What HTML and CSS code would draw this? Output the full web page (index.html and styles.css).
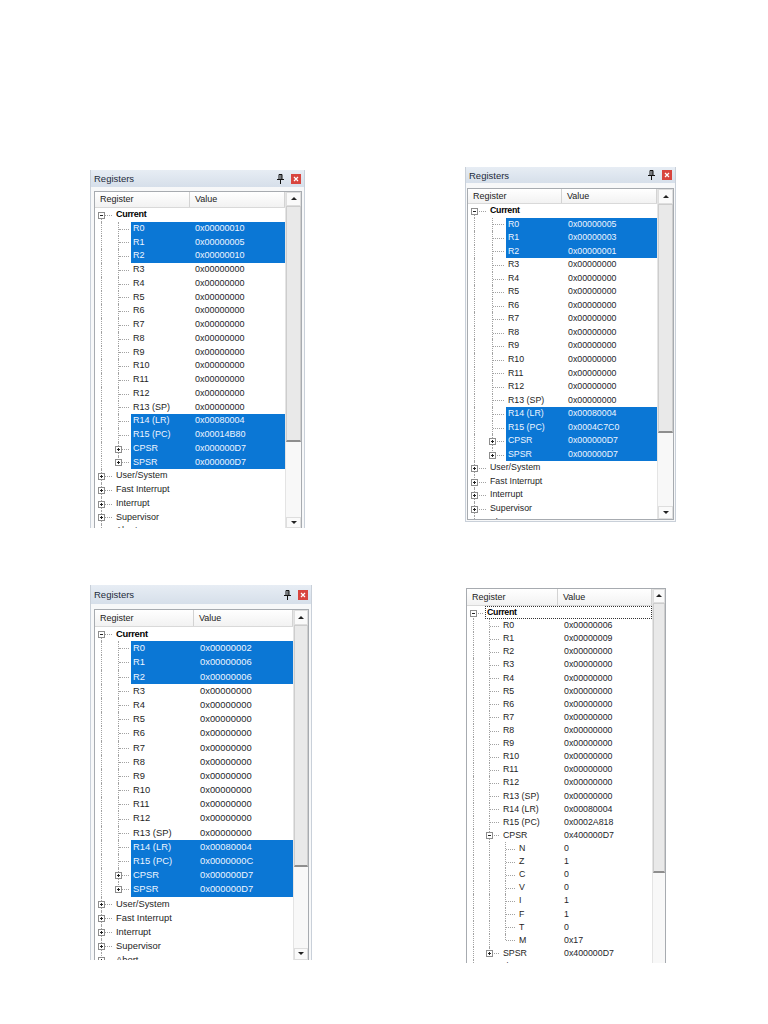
FILE: index.html
```html
<!DOCTYPE html>
<html lang="en">
<head>
  <meta charset="UTF-8">
  <title>Registers</title>
<link rel="stylesheet" href="styles.css">
</head>
<body>
<div class="page">

  <!-- 1 -->
  <div class="panel p1">
    <div class="title">
      <span>Registers</span>
      <span class="btns">
        <svg width="7" height="10" viewBox="0 0 7 10"><path d="M2 .5h3v5h-3z" fill="none" stroke="#111"/><path d="M4 1v4M0 5.5h7M3.5 5.5V10" stroke="#111"/></svg>
        <svg width="10" height="10" viewBox="0 0 10 10"><rect width="10" height="10" fill="#d8453e"/><path d="M3 3l4 4M7 3L3 7" stroke="#fff" stroke-width="1.2"/></svg>
      </span>
    </div>
    <div class="body">
      <div class="list">
        <div class="main">
          <div class="head"><div class="hc">Register</div><div class="hc">Value</div></div>
          <div class="row top"><div class="t"><i class="c first"><i class="x"></i></i><b class="n">Current</b></div></div>
          <div class="row sel"><div class="t"><i class="g"></i><i class="c"></i><span class="n">R0</span></div><div class="v">0x00000010</div></div>
          <div class="row sel"><div class="t"><i class="g"></i><i class="c"></i><span class="n">R1</span></div><div class="v">0x00000005</div></div>
          <div class="row sel"><div class="t"><i class="g"></i><i class="c"></i><span class="n">R2</span></div><div class="v">0x00000010</div></div>
          <div class="row"><div class="t"><i class="g"></i><i class="c"></i><span class="n">R3</span></div><div class="v">0x00000000</div></div>
          <div class="row"><div class="t"><i class="g"></i><i class="c"></i><span class="n">R4</span></div><div class="v">0x00000000</div></div>
          <div class="row"><div class="t"><i class="g"></i><i class="c"></i><span class="n">R5</span></div><div class="v">0x00000000</div></div>
          <div class="row"><div class="t"><i class="g"></i><i class="c"></i><span class="n">R6</span></div><div class="v">0x00000000</div></div>
          <div class="row"><div class="t"><i class="g"></i><i class="c"></i><span class="n">R7</span></div><div class="v">0x00000000</div></div>
          <div class="row"><div class="t"><i class="g"></i><i class="c"></i><span class="n">R8</span></div><div class="v">0x00000000</div></div>
          <div class="row"><div class="t"><i class="g"></i><i class="c"></i><span class="n">R9</span></div><div class="v">0x00000000</div></div>
          <div class="row"><div class="t"><i class="g"></i><i class="c"></i><span class="n">R10</span></div><div class="v">0x00000000</div></div>
          <div class="row"><div class="t"><i class="g"></i><i class="c"></i><span class="n">R11</span></div><div class="v">0x00000000</div></div>
          <div class="row"><div class="t"><i class="g"></i><i class="c"></i><span class="n">R12</span></div><div class="v">0x00000000</div></div>
          <div class="row"><div class="t"><i class="g"></i><i class="c"></i><span class="n">R13 (SP)</span></div><div class="v">0x00000000</div></div>
          <div class="row sel"><div class="t"><i class="g"></i><i class="c"></i><span class="n">R14 (LR)</span></div><div class="v">0x00080004</div></div>
          <div class="row sel"><div class="t"><i class="g"></i><i class="c"></i><span class="n">R15 (PC)</span></div><div class="v">0x00014B80</div></div>
          <div class="row sel"><div class="t"><i class="g"></i><i class="c"><i class="x plus"></i></i><span class="n">CPSR</span></div><div class="v">0x000000D7</div></div>
          <div class="row sel"><div class="t"><i class="g"></i><i class="c last"><i class="x plus"></i></i><span class="n">SPSR</span></div><div class="v">0x000000D7</div></div>
          <div class="row top"><div class="t"><i class="c"><i class="x plus"></i></i><span class="n">User/System</span></div></div>
          <div class="row top"><div class="t"><i class="c"><i class="x plus"></i></i><span class="n">Fast Interrupt</span></div></div>
          <div class="row top"><div class="t"><i class="c"><i class="x plus"></i></i><span class="n">Interrupt</span></div></div>
          <div class="row top"><div class="t"><i class="c"><i class="x plus"></i></i><span class="n">Supervisor</span></div></div>
          <div class="row top"><div class="t"><i class="c"><i class="x plus"></i></i><span class="n">Abort</span></div></div>
        </div>
        <div class="scroll">
          <div class="btn up"></div><div class="thumb"></div><div class="track"></div><div class="btn down"></div>
        </div>
      </div>
    </div>
  </div>

  <!-- 2 -->
  <div class="panel p2">
    <div class="title">
      <span>Registers</span>
      <span class="btns">
        <svg width="7" height="10" viewBox="0 0 7 10"><path d="M2 .5h3v5h-3z" fill="none" stroke="#111"/><path d="M4 1v4M0 5.5h7M3.5 5.5V10" stroke="#111"/></svg>
        <svg width="10" height="10" viewBox="0 0 10 10"><rect width="10" height="10" fill="#d8453e"/><path d="M3 3l4 4M7 3L3 7" stroke="#fff" stroke-width="1.2"/></svg>
      </span>
    </div>
    <div class="body">
      <div class="list">
        <div class="main">
          <div class="head"><div class="hc">Register</div><div class="hc">Value</div></div>
          <div class="row top"><div class="t"><i class="c first"><i class="x"></i></i><b class="n">Current</b></div></div>
          <div class="row sel"><div class="t"><i class="g"></i><i class="c"></i><span class="n">R0</span></div><div class="v">0x00000005</div></div>
          <div class="row sel"><div class="t"><i class="g"></i><i class="c"></i><span class="n">R1</span></div><div class="v">0x00000003</div></div>
          <div class="row sel"><div class="t"><i class="g"></i><i class="c"></i><span class="n">R2</span></div><div class="v">0x00000001</div></div>
          <div class="row"><div class="t"><i class="g"></i><i class="c"></i><span class="n">R3</span></div><div class="v">0x00000000</div></div>
          <div class="row"><div class="t"><i class="g"></i><i class="c"></i><span class="n">R4</span></div><div class="v">0x00000000</div></div>
          <div class="row"><div class="t"><i class="g"></i><i class="c"></i><span class="n">R5</span></div><div class="v">0x00000000</div></div>
          <div class="row"><div class="t"><i class="g"></i><i class="c"></i><span class="n">R6</span></div><div class="v">0x00000000</div></div>
          <div class="row"><div class="t"><i class="g"></i><i class="c"></i><span class="n">R7</span></div><div class="v">0x00000000</div></div>
          <div class="row"><div class="t"><i class="g"></i><i class="c"></i><span class="n">R8</span></div><div class="v">0x00000000</div></div>
          <div class="row"><div class="t"><i class="g"></i><i class="c"></i><span class="n">R9</span></div><div class="v">0x00000000</div></div>
          <div class="row"><div class="t"><i class="g"></i><i class="c"></i><span class="n">R10</span></div><div class="v">0x00000000</div></div>
          <div class="row"><div class="t"><i class="g"></i><i class="c"></i><span class="n">R11</span></div><div class="v">0x00000000</div></div>
          <div class="row"><div class="t"><i class="g"></i><i class="c"></i><span class="n">R12</span></div><div class="v">0x00000000</div></div>
          <div class="row"><div class="t"><i class="g"></i><i class="c"></i><span class="n">R13 (SP)</span></div><div class="v">0x00000000</div></div>
          <div class="row sel"><div class="t"><i class="g"></i><i class="c"></i><span class="n">R14 (LR)</span></div><div class="v">0x00080004</div></div>
          <div class="row sel"><div class="t"><i class="g"></i><i class="c"></i><span class="n">R15 (PC)</span></div><div class="v">0x0004C7C0</div></div>
          <div class="row sel"><div class="t"><i class="g"></i><i class="c"><i class="x plus"></i></i><span class="n">CPSR</span></div><div class="v">0x000000D7</div></div>
          <div class="row sel"><div class="t"><i class="g"></i><i class="c last"><i class="x plus"></i></i><span class="n">SPSR</span></div><div class="v">0x000000D7</div></div>
          <div class="row top"><div class="t"><i class="c"><i class="x plus"></i></i><span class="n">User/System</span></div></div>
          <div class="row top"><div class="t"><i class="c"><i class="x plus"></i></i><span class="n">Fast Interrupt</span></div></div>
          <div class="row top"><div class="t"><i class="c"><i class="x plus"></i></i><span class="n">Interrupt</span></div></div>
          <div class="row top"><div class="t"><i class="c"><i class="x plus"></i></i><span class="n">Supervisor</span></div></div>
          <div class="row top"><div class="t"><i class="c"><i class="x plus"></i></i><span class="n">Abort</span></div></div>
        </div>
        <div class="scroll">
          <div class="btn up"></div><div class="thumb"></div><div class="track"></div><div class="btn down"></div>
        </div>
      </div>
    </div>
  </div>

  <!-- 3 -->
  <div class="panel p3">
    <div class="title">
      <span>Registers</span>
      <span class="btns">
        <svg width="7" height="10" viewBox="0 0 7 10"><path d="M2 .5h3v5h-3z" fill="none" stroke="#111"/><path d="M4 1v4M0 5.5h7M3.5 5.5V10" stroke="#111"/></svg>
        <svg width="10" height="10" viewBox="0 0 10 10"><rect width="10" height="10" fill="#d8453e"/><path d="M3 3l4 4M7 3L3 7" stroke="#fff" stroke-width="1.2"/></svg>
      </span>
    </div>
    <div class="body">
      <div class="list">
        <div class="main">
          <div class="head"><div class="hc">Register</div><div class="hc">Value</div></div>
          <div class="row top"><div class="t"><i class="c first"><i class="x"></i></i><b class="n">Current</b></div></div>
          <div class="row sel"><div class="t"><i class="g"></i><i class="c"></i><span class="n">R0</span></div><div class="v">0x00000002</div></div>
          <div class="row sel"><div class="t"><i class="g"></i><i class="c"></i><span class="n">R1</span></div><div class="v">0x00000006</div></div>
          <div class="row sel"><div class="t"><i class="g"></i><i class="c"></i><span class="n">R2</span></div><div class="v">0x00000006</div></div>
          <div class="row"><div class="t"><i class="g"></i><i class="c"></i><span class="n">R3</span></div><div class="v">0x00000000</div></div>
          <div class="row"><div class="t"><i class="g"></i><i class="c"></i><span class="n">R4</span></div><div class="v">0x00000000</div></div>
          <div class="row"><div class="t"><i class="g"></i><i class="c"></i><span class="n">R5</span></div><div class="v">0x00000000</div></div>
          <div class="row"><div class="t"><i class="g"></i><i class="c"></i><span class="n">R6</span></div><div class="v">0x00000000</div></div>
          <div class="row"><div class="t"><i class="g"></i><i class="c"></i><span class="n">R7</span></div><div class="v">0x00000000</div></div>
          <div class="row"><div class="t"><i class="g"></i><i class="c"></i><span class="n">R8</span></div><div class="v">0x00000000</div></div>
          <div class="row"><div class="t"><i class="g"></i><i class="c"></i><span class="n">R9</span></div><div class="v">0x00000000</div></div>
          <div class="row"><div class="t"><i class="g"></i><i class="c"></i><span class="n">R10</span></div><div class="v">0x00000000</div></div>
          <div class="row"><div class="t"><i class="g"></i><i class="c"></i><span class="n">R11</span></div><div class="v">0x00000000</div></div>
          <div class="row"><div class="t"><i class="g"></i><i class="c"></i><span class="n">R12</span></div><div class="v">0x00000000</div></div>
          <div class="row"><div class="t"><i class="g"></i><i class="c"></i><span class="n">R13 (SP)</span></div><div class="v">0x00000000</div></div>
          <div class="row sel"><div class="t"><i class="g"></i><i class="c"></i><span class="n">R14 (LR)</span></div><div class="v">0x00080004</div></div>
          <div class="row sel"><div class="t"><i class="g"></i><i class="c"></i><span class="n">R15 (PC)</span></div><div class="v">0x0000000C</div></div>
          <div class="row sel"><div class="t"><i class="g"></i><i class="c"><i class="x plus"></i></i><span class="n">CPSR</span></div><div class="v">0x000000D7</div></div>
          <div class="row sel"><div class="t"><i class="g"></i><i class="c last"><i class="x plus"></i></i><span class="n">SPSR</span></div><div class="v">0x000000D7</div></div>
          <div class="row top"><div class="t"><i class="c"><i class="x plus"></i></i><span class="n">User/System</span></div></div>
          <div class="row top"><div class="t"><i class="c"><i class="x plus"></i></i><span class="n">Fast Interrupt</span></div></div>
          <div class="row top"><div class="t"><i class="c"><i class="x plus"></i></i><span class="n">Interrupt</span></div></div>
          <div class="row top"><div class="t"><i class="c"><i class="x plus"></i></i><span class="n">Supervisor</span></div></div>
          <div class="row top"><div class="t"><i class="c"><i class="x plus"></i></i><span class="n">Abort</span></div></div>
        </div>
        <div class="scroll">
          <div class="btn up"></div><div class="thumb"></div><div class="track"></div><div class="btn down"></div>
        </div>
      </div>
    </div>
  </div>

  <!-- 4 -->
  <div class="panel p4">
    <div class="body">
      <div class="list">
        <div class="main">
          <div class="head"><div class="hc">Register</div><div class="hc">Value</div></div>
          <div class="row top focus"><div class="t"><i class="c first"><i class="x"></i></i><b class="n">Current</b></div></div>
          <div class="row"><div class="t"><i class="g"></i><i class="c"></i><span class="n">R0</span></div><div class="v">0x00000006</div></div>
          <div class="row"><div class="t"><i class="g"></i><i class="c"></i><span class="n">R1</span></div><div class="v">0x00000009</div></div>
          <div class="row"><div class="t"><i class="g"></i><i class="c"></i><span class="n">R2</span></div><div class="v">0x00000000</div></div>
          <div class="row"><div class="t"><i class="g"></i><i class="c"></i><span class="n">R3</span></div><div class="v">0x00000000</div></div>
          <div class="row"><div class="t"><i class="g"></i><i class="c"></i><span class="n">R4</span></div><div class="v">0x00000000</div></div>
          <div class="row"><div class="t"><i class="g"></i><i class="c"></i><span class="n">R5</span></div><div class="v">0x00000000</div></div>
          <div class="row"><div class="t"><i class="g"></i><i class="c"></i><span class="n">R6</span></div><div class="v">0x00000000</div></div>
          <div class="row"><div class="t"><i class="g"></i><i class="c"></i><span class="n">R7</span></div><div class="v">0x00000000</div></div>
          <div class="row"><div class="t"><i class="g"></i><i class="c"></i><span class="n">R8</span></div><div class="v">0x00000000</div></div>
          <div class="row"><div class="t"><i class="g"></i><i class="c"></i><span class="n">R9</span></div><div class="v">0x00000000</div></div>
          <div class="row"><div class="t"><i class="g"></i><i class="c"></i><span class="n">R10</span></div><div class="v">0x00000000</div></div>
          <div class="row"><div class="t"><i class="g"></i><i class="c"></i><span class="n">R11</span></div><div class="v">0x00000000</div></div>
          <div class="row"><div class="t"><i class="g"></i><i class="c"></i><span class="n">R12</span></div><div class="v">0x00000000</div></div>
          <div class="row"><div class="t"><i class="g"></i><i class="c"></i><span class="n">R13 (SP)</span></div><div class="v">0x00000000</div></div>
          <div class="row"><div class="t"><i class="g"></i><i class="c"></i><span class="n">R14 (LR)</span></div><div class="v">0x00080004</div></div>
          <div class="row"><div class="t"><i class="g"></i><i class="c"></i><span class="n">R15 (PC)</span></div><div class="v">0x0002A818</div></div>
          <div class="row"><div class="t"><i class="g"></i><i class="c"><i class="x"></i></i><span class="n">CPSR</span></div><div class="v">0x400000D7</div></div>
          <div class="row"><div class="t"><i class="g"></i><i class="g"></i><i class="c"></i><span class="n">N</span></div><div class="v">0</div></div>
          <div class="row"><div class="t"><i class="g"></i><i class="g"></i><i class="c"></i><span class="n">Z</span></div><div class="v">1</div></div>
          <div class="row"><div class="t"><i class="g"></i><i class="g"></i><i class="c"></i><span class="n">C</span></div><div class="v">0</div></div>
          <div class="row"><div class="t"><i class="g"></i><i class="g"></i><i class="c"></i><span class="n">V</span></div><div class="v">0</div></div>
          <div class="row"><div class="t"><i class="g"></i><i class="g"></i><i class="c"></i><span class="n">I</span></div><div class="v">1</div></div>
          <div class="row"><div class="t"><i class="g"></i><i class="g"></i><i class="c"></i><span class="n">F</span></div><div class="v">1</div></div>
          <div class="row"><div class="t"><i class="g"></i><i class="g"></i><i class="c"></i><span class="n">T</span></div><div class="v">0</div></div>
          <div class="row"><div class="t"><i class="g"></i><i class="g"></i><i class="c last"></i><span class="n">M</span></div><div class="v">0x17</div></div>
          <div class="row"><div class="t"><i class="g"></i><i class="c last"><i class="x plus"></i></i><span class="n">SPSR</span></div><div class="v">0x400000D7</div></div>
          <div class="row top"><div class="t"><i class="c"><i class="x plus"></i></i><span class="n">User/System</span></div></div>
        </div>
        <div class="scroll">
          <div class="btn up"></div><div class="thumb"></div><div class="track"></div>
        </div>
      </div>
    </div>
  </div>

</div>
</body>
</html>
```

FILE: styles.css
```css
body {
  margin: 0;
  background: #fff;
  font-family: "Liberation Sans", Arial, sans-serif;
  color: #1e1e1e;
}
* {
  box-sizing: border-box;
}
.page {
  display: grid;
  grid-template-columns: 375px auto;
  row-gap: 57px;
  align-items: start;
  padding: 167px 0 0 90px;
}
.panel {
  display: flex;
  flex-direction: column;
  overflow: hidden;
  background: #f7f8f9;
  border: 1px solid #c9d0d9;
  border-top: none;
  border-bottom: none;
}
.title {
  flex: none;
  display: flex;
  align-items: center;
  justify-content: space-between;
  margin: 0 -1px;
  padding: 0 4px 0 4px;
  background: linear-gradient(#e7edf4, #d6dfea);
  color: #1d2b3b;
  font-size: 9.5px;
}
.btns {
  display: flex;
  align-items: center;
  gap: 7px;
}
.btns svg {
  display: block;
}
.body {
  flex: 1;
  display: flex;
  min-height: 0;
}
.list {
  flex: 1;
  display: flex;
  min-height: 0;
  background: #fff;
  border: 1px solid #a7abb0;
  border-bottom: none;
}
.main {
  flex: 1;
  min-width: 0;
  overflow: hidden;
}
.head {
  display: grid;
  grid-template-columns: var(--col) 1fr;
  height: var(--hh);
  background: linear-gradient(#fff, #f2f2f2);
  border-bottom: 1px solid #d9d9d9;
  font-size: 9px;
  color: #222;
}
.hc {
  padding-left: 5px;
  line-height: calc(var(--hh) - 1px);
  border-right: 1px solid #d3d3d3;
}

/* tree rows */
.row {
  display: grid;
  grid-template-columns: var(--col) 1fr;
  height: var(--rh);
  line-height: var(--rh);
  font-size: var(--fs);
}
.row.top .t {
  grid-column: 1 / -1;
}
.t {
  display: flex;
  min-width: 0;
}
.g, .c {
  flex: none;
  width: var(--g);
  position: relative;
}
.g::before, .c::before {
  content: '';
  position: absolute;
  left: 6px;
  top: 0;
  bottom: 0;
  border-left: 1px dotted #a2a2a2;
}
.c.first::before {
  top: 50%;
}
.c.last::before {
  bottom: 50%;
}
.c::after {
  content: '';
  position: absolute;
  left: 7px;
  right: 0;
  top: 50%;
  border-top: 1px dotted #a2a2a2;
}
.x {
  position: absolute;
  z-index: 1;
  left: 3px;
  top: calc(50% - 3px);
  width: 7px;
  height: 7px;
  border: 1px solid #8d8d8d;
  background: #fff;
}
.x::before {
  content: '';
  position: absolute;
  left: 1px;
  top: 2px;
  width: 3px;
  height: 1px;
  background: #222;
}
.x.plus::after {
  content: '';
  position: absolute;
  left: 2px;
  top: 1px;
  width: 1px;
  height: 3px;
  background: #222;
}
.n {
  flex: 1;
  min-width: 0;
  margin-left: 2px;
  padding-left: 2px;
  white-space: nowrap;
  overflow: hidden;
  font-style: normal;
}
b.n {
  color: #000;
  letter-spacing: -0.3px;
}
.v {
  padding-left: var(--vp);
  white-space: nowrap;
  overflow: hidden;
  color: #25262b;
}
.sel .n, .sel .v {
  background: #0b77d5;
  color: #eef5ff;
}
.focus .n {
  padding-left: 1px;
  border: 1px dotted #333;
  line-height: calc(var(--rh) - 2px);
}

/* scrollbar */
.scroll {
  flex: none;
  width: var(--sw);
  display: flex;
  flex-direction: column;
  background: #f4f4f4;
  border-left: 1px solid #e4e4e4;
}
.btn {
  flex: none;
  position: relative;
  background: #fafafa;
  border: 1px solid #dedede;
}
.btn::after {
  content: '';
  position: absolute;
  left: calc(50% - 3px);
  top: calc(50% - 2px);
  border-left: 3px solid transparent;
  border-right: 3px solid transparent;
}
.up::after {
  border-bottom: 3px solid #222;
}
.down::after {
  border-top: 3px solid #222;
}
.thumb {
  flex: none;
  background: #e9e9e9;
  border: 1px solid #cdcdcd;
  border-bottom: 2px solid #8e8e8e;
}
.track {
  flex: 1;
  background: #f8f8f8;
}

/* per window */
.p1 {
  --col: 95px; --g: 17px; --rh: 13.75px; --hh: 16px; --vp: 5px; --fs: 9px; --sw: 16px;
  width: 215px;
  height: 358px;
  margin-top: 3px;
}
.p1 .title { height: 17px; }
.p1 .body { padding: 4px 2px 0 3px; }
.p1 .up { height: 14px; }
.p1 .thumb { height: 236px; }
.p1 .down { height: 11px; }

.p2 {
  --col: 94px; --g: 18px; --rh: 13.55px; --hh: 15px; --vp: 6px; --fs: 8.8px; --sw: 16px;
  width: 211px;
  height: 355px;
  border-bottom: 1px solid #c9d0d9;
}
.p2 .title { height: 16px; }
.p2 .body { padding: 5px 1px 1px 1px; }
.p2 .list { border-bottom: 1px solid #a7abb0; }
.p2 .up { height: 15px; }
.p2 .thumb { height: 229px; }
.p2 .down { height: 13px; }

.p3 {
  --col: 99px; --g: 17px; --rh: 14.2px; --hh: 17px; --vp: 6px; --fs: 9.4px; --sw: 15px;
  width: 222px;
  height: 375px;
}
.p3 .title { height: 19px; }
.p3 .body { padding: 5px 2px 0 3px; }
.p3 .up { height: 15px; }
.p3 .thumb { height: 242px; }
.p3 .down { height: 12px; }

.p4 {
  --col: 91px; --g: 16px; --rh: 13.12px; --hh: 17px; --vp: 6px; --fs: 8.8px; --sw: 13px;
  width: 200px;
  height: 375px;
  margin: 3px 0 0 1px;
  border: none;
  background: none;
}
.p4 .up { height: 14px; }
.p4 .thumb { height: 270px; }
```
